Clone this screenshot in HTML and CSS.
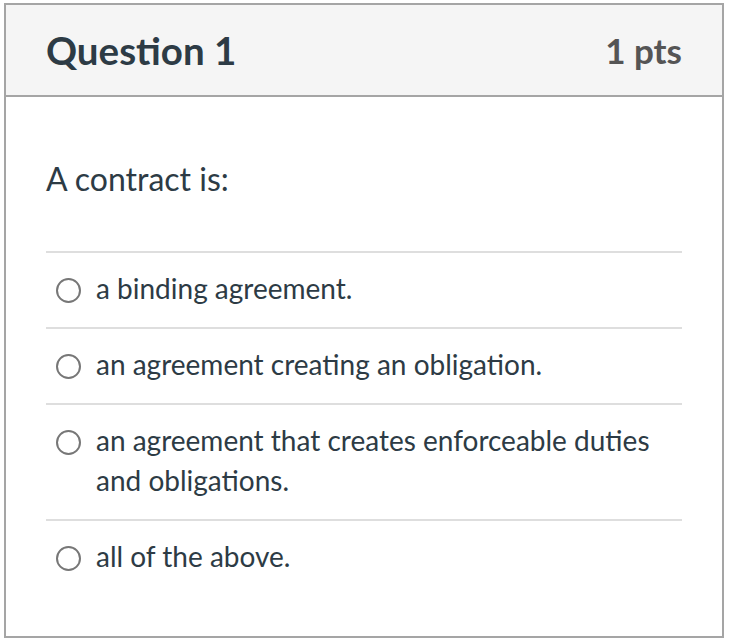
FILE: index.html
```html
<!DOCTYPE html>
<html>
<head>
<meta charset="utf-8">
<link rel="stylesheet" href="styles.css">
</head>
<body>
<div class="question">
  <div class="header">
    <h2 class="title">Question 1</h2>
    <span class="points">1 pts</span>
  </div>
  <div class="content">
    <p class="text">A contract is:</p>
    <ul class="answers">
      <li class="answer"><span class="radio"></span><span class="label">a binding agreement.</span></li>
      <li class="answer"><span class="radio"></span><span class="label">an agreement creating an obligation.</span></li>
      <li class="answer"><span class="radio"></span><span class="label">an agreement that creates enforceable duties and obligations.</span></li>
      <li class="answer"><span class="radio"></span><span class="label">all of the above.</span></li>
    </ul>
  </div>
</div>
</body>
</html>
```
FILE: styles.css
```css
html, body {
  margin: 0;
  padding: 0;
  background: #ffffff;
}
body {
  padding: 3px 10px 0 4px;
  font-family: Lato, "Noto Sans", sans-serif;
  color: #2d3b45;
}
.question {
  width: 720px;
  border: 2px solid #a5a5a5;
  box-sizing: border-box;
  height: 635px;
}
.header {
  background: #f5f5f5;
  border-bottom: 2px solid #a5a5a5;
  height: 92px;
  box-sizing: border-box;
  padding: 0 40px;
  display: flex;
  align-items: center;
  justify-content: space-between;
}
.title {
  margin: 0;
  font-size: 38.5px;
  font-weight: 700;
  color: #2d3b45;
}
.points {
  font-size: 35px;
  font-weight: 700;
  color: #555555;
}
.content {
  padding: 62px 40px 40px;
}
.text {
  margin: 0 0 52px;
  font-size: 32px;
  line-height: 40px;
}
.answers {
  list-style: none;
  margin: 0;
  padding: 0;
}
.answer {
  border-top: 2px solid #dedede;
  padding: 15px 0 19px 10px;
  display: flex;
  align-items: flex-start;
  font-size: 28px;
  line-height: 40px;
}
.radio {
  flex: none;
  width: 21px;
  height: 21px;
  border: 2px solid #777777;
  border-radius: 50%;
  margin-top: 10px;
  margin-right: 15px;
}
.label {
  flex: 1;
}
```
